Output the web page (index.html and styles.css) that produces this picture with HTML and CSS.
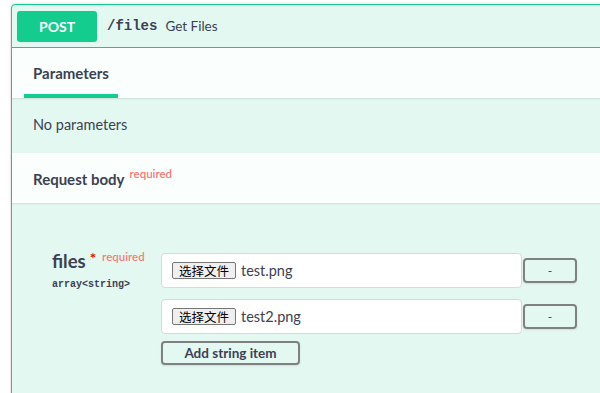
FILE: index.html
```html
<!DOCTYPE html>
<html lang="en">
<head>
    <meta charset="UTF-8">
    <meta name="viewport" content="width=device-width, initial-scale=1.0">
    <title>Swagger UI - POST /files</title>
    <link rel="stylesheet" href="styles.css">
</head>
<body>
    <div class="opblock">
        <div class="summary">
            <span class="method">POST</span>
            <span class="path">/files</span>
            <span class="desc">Get Files</span>
        </div>

        <div class="section-header">
            <div class="tab">Parameters</div>
        </div>
        <div class="no-params">No parameters</div>

        <div class="section-header body-header">
            <span class="section-title">Request body</span>
            <sup class="req">required</sup>
        </div>

        <div class="body-content">
            <div class="param-name">
                <div class="name-line">
                    <span class="pname">files</span>
                    <span class="star">*</span>
                    <span class="req">required</span>
                </div>
                <div class="ptype">array&lt;string&gt;</div>
            </div>
            <div class="param-value">
                <div class="item-row">
                    <div class="file-box">
                        <span class="file-btn">选择文件</span>
                        <span class="file-name">test.png</span>
                    </div>
                    <button class="btn remove">-</button>
                </div>
                <div class="item-row">
                    <div class="file-box">
                        <span class="file-btn">选择文件</span>
                        <span class="file-name">test2.png</span>
                    </div>
                    <button class="btn remove">-</button>
                </div>
                <button class="btn add">Add string item</button>
            </div>
        </div>
    </div>
</body>
</html>
```

FILE: styles.css
```css
body {
    margin: 0;
    padding: 4px 0 0 11px;
    overflow: hidden;
    height: 389px;
    background-color: #ffffff;
    font-family: Lato, "Noto Sans", sans-serif;
    color: #3b4151;
}
.opblock {
    margin-right: -30px;
    height: 420px;
    border: 1px solid #14cc8e;
    border-radius: 4px;
    background-color: #e3f8f1;
    box-shadow: 0 0 3px rgba(0,0,0,0.19);
}
.summary {
    display: flex;
    align-items: center;
    height: 42px;
    padding: 0 5px;
    border-bottom: 1px solid #14cc8e;
}
.method {
    width: 80px;
    height: 31px;
    line-height: 31px;
    text-align: center;
    background-color: #14cc8e;
    color: white;
    font-size: 14px;
    font-weight: bold;
    border-radius: 3px;
}
.path {
    margin-left: 10px;
    font-family: "Liberation Mono", monospace;
    font-size: 14px;
    font-weight: bold;
    color: #3b4151;
}
.desc {
    margin-left: 8px;
    font-size: 13.5px;
}
.section-header {
    display: flex;
    align-items: center;
    height: 50px;
    padding: 0 12px;
    background-color: rgba(255,255,255,0.8);
    box-shadow: 0 1px 2px rgba(0,0,0,0.1);
}
.tab {
    align-self: stretch;
    display: flex;
    align-items: center;
    padding: 4px 9px 0;
    font-size: 15px;
    font-weight: bold;
    border-bottom: 4px solid #14cc8e;
}
.no-params {
    height: 55px;
    line-height: 53px;
    padding: 0 21px;
    font-size: 14.5px;
}
.body-header {
    padding: 0 21px;
}
.section-title {
    font-size: 15px;
    font-weight: bold;
    padding-top: 1px;
}
.req {
    color: #f95555;
    opacity: 0.8;
    font-size: 11.5px;
    font-weight: 600;
    margin-left: 5px;
    align-self: flex-start;
    margin-top: 14px;
}
.body-content {
    display: flex;
    padding: 47px 0 0 40px;
}
.param-name {
    width: 109px;
}
.name-line {
    display: flex;
    align-items: flex-start;
}
.pname {
    font-size: 18.5px;
    font-weight: bold;
    line-height: 22px;
}
.star {
    color: red;
    font-size: 15px;
    font-weight: bold;
    margin-left: 4px;
    line-height: 16px;
}
.name-line .req {
    margin-top: 0;
    margin-left: 6px;
    line-height: 14px;
    opacity: 0.75;
}
.ptype {
    margin-top: 7px;
    font-family: "Liberation Mono", monospace;
    font-size: 10px;
    font-weight: bold;
    color: #3b4151;
}
.param-value {
    display: flex;
    flex-direction: column;
    align-items: flex-start;
    gap: 11px;
    padding-top: 3px;
}
.item-row {
    display: flex;
    align-items: center;
    gap: 1px;
}
.file-box {
    display: flex;
    align-items: center;
    width: 339px;
    height: 33px;
    padding: 0 10px;
    background-color: white;
    border: 1px solid #d9d9d9;
    border-radius: 4px;
}
.file-btn {
    box-sizing: border-box;
    width: 64px;
    height: 17px;
    line-height: 15px;
    text-align: center;
    font-family: "Noto Sans CJK SC", sans-serif;
    font-size: 12.5px;
    color: #000;
    background-color: #efefef;
    border: 1px solid #767676;
    border-radius: 2px;
}
.file-name {
    margin-left: 5px;
    font-size: 14.5px;
}
.btn {
    box-sizing: border-box;
    background: transparent;
    border: 2px solid #808080;
    border-radius: 4px;
    font-family: Lato, sans-serif;
    color: #3b4151;
    box-shadow: 0 1px 2px rgba(0,0,0,0.1);
}
.remove {
    width: 54px;
    height: 25px;
    font-size: 12px;
    padding: 0;
}
.add {
    width: 139px;
    height: 24px;
    margin-top: -4px;
    font-size: 13.5px;
    font-weight: bold;
    padding: 0;
}
```
